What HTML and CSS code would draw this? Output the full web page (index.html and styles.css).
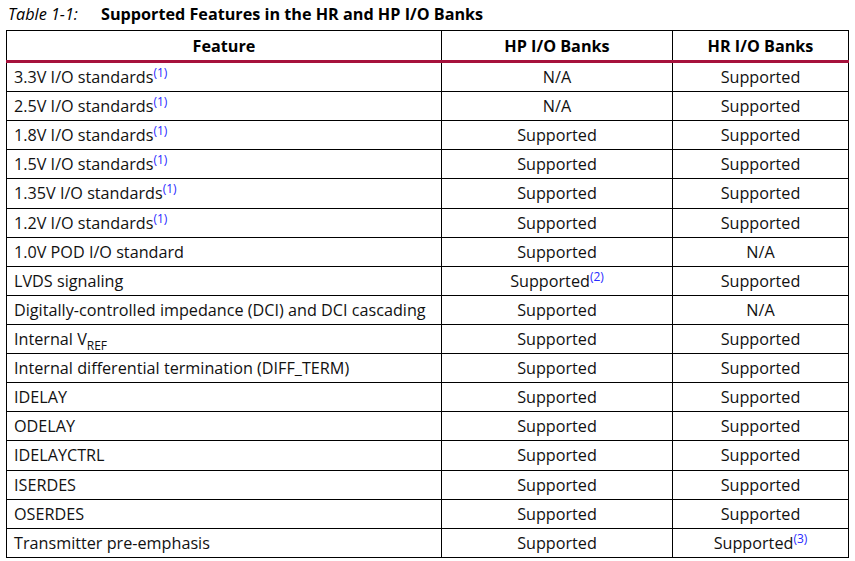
FILE: index.html
```html
<!DOCTYPE html>
<html>
<head>
<meta charset="utf-8">
<link rel="stylesheet" href="styles.css">
</head>
<body>
<div class="title"><span class="label">Table 1-1:</span><span class="caption">Supported Features in the HR and HP I/O Banks</span></div>
<table class="features">
<colgroup><col class="c1"><col class="c2"><col class="c3"></colgroup>
<thead>
<tr><th>Feature</th><th>HP I/O Banks</th><th>HR I/O Banks</th></tr>
</thead>
<tbody>
<tr><td>3.3V I/O standards<sup>(1)</sup></td><td>N/A</td><td>Supported</td></tr>
<tr><td>2.5V I/O standards<sup>(1)</sup></td><td>N/A</td><td>Supported</td></tr>
<tr><td>1.8V I/O standards<sup>(1)</sup></td><td>Supported</td><td>Supported</td></tr>
<tr><td>1.5V I/O standards<sup>(1)</sup></td><td>Supported</td><td>Supported</td></tr>
<tr><td>1.35V I/O standards<sup>(1)</sup></td><td>Supported</td><td>Supported</td></tr>
<tr><td>1.2V I/O standards<sup>(1)</sup></td><td>Supported</td><td>Supported</td></tr>
<tr><td>1.0V POD I/O standard</td><td>Supported</td><td>N/A</td></tr>
<tr><td>LVDS signaling</td><td>Supported<sup>(2)</sup></td><td>Supported</td></tr>
<tr><td>Digitally-controlled impedance (DCI) and DCI cascading</td><td>Supported</td><td>N/A</td></tr>
<tr><td>Internal V<sub>REF</sub></td><td>Supported</td><td>Supported</td></tr>
<tr><td>Internal differential termination (DIFF_TERM)</td><td>Supported</td><td>Supported</td></tr>
<tr><td>IDELAY</td><td>Supported</td><td>Supported</td></tr>
<tr><td>ODELAY</td><td>Supported</td><td>Supported</td></tr>
<tr><td>IDELAYCTRL</td><td>Supported</td><td>Supported</td></tr>
<tr><td>ISERDES</td><td>Supported</td><td>Supported</td></tr>
<tr><td>OSERDES</td><td>Supported</td><td>Supported</td></tr>
<tr><td>Transmitter pre-emphasis</td><td>Supported</td><td>Supported<sup>(3)</sup></td></tr>
</tbody>
</table>
</body>
</html>
```
FILE: styles.css
```css
html, body {
  margin: 0;
  padding: 0;
  background: #ffffff;
}
body {
  font-family: "Open Sans", "Noto Sans", sans-serif;
  color: #111;
  padding: 3px 0 0 6px;
}
.title {
  font-size: 16.2px;
  line-height: 22px;
  height: 27px;
  padding-left: 2px;
  color: #000;
}
.title .label {
  font-style: italic;
  display: inline-block;
  width: 93px;
}
.title .caption {
  font-weight: 700;
}
.features {
  border-collapse: collapse;
  table-layout: fixed;
  width: 842px;
  font-size: 16.2px;
}
.c1 { width: 435px; }
.c2 { width: 231px; }
.c3 { width: 176px; }
.features th,
.features td {
  border: 1px solid #000;
  padding: 0 7px;
  line-height: 20px;
  vertical-align: middle;
  white-space: nowrap;
}
.features th {
  height: 29px;
  font-weight: 700;
  text-align: center;
  border-bottom: 3px solid #a6113c;
  color: #000;
}
.features td {
  text-align: center;
  padding-top: 1px;
  padding-bottom: 1px;
  height: 26.12px;
}
.features td:first-child {
  text-align: left;
}
.features sup {
  color: #2a2aff;
  font-size: 12px;
  line-height: 0;
  vertical-align: 6px;
}
.features sub {
  font-size: 12px;
  line-height: 0;
  vertical-align: -5px;
}
```
